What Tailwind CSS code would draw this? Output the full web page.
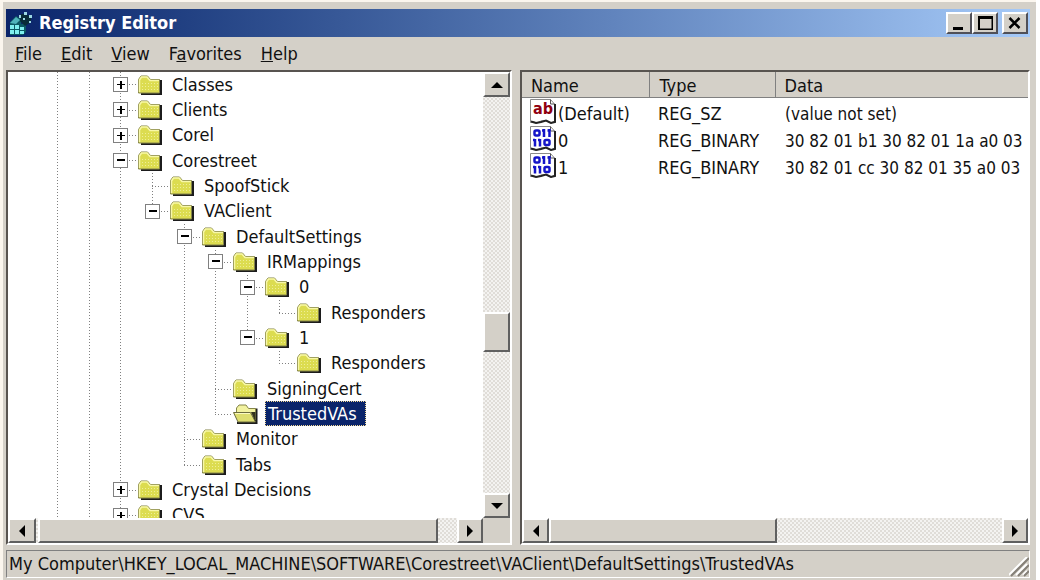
<!DOCTYPE html>
<html lang="en">
<head>
<meta charset="utf-8">
<title>Registry Editor</title>
<script src="https://cdn.jsdelivr.net/npm/@tailwindcss/browser@4"></script>
</head>
<body class="bg-white">
<svg class="hidden" aria-hidden="true">
  <symbol id="folder" viewBox="0 0 24 20">
    <path d="M3 20V18H22V5H24V20Z" fill="#1c1c1c"/>
    <path d="M.5 18V4.500L3 1H9.500L12.500 4.500H21.500V18Z" fill="#dcdc50" stroke="#85854a"/>
    <path d="M1.500 17V5L3.500 2H9L12 5.500H21" fill="none" stroke="#f8f8a8" stroke-width="1.500"/>
    <path d="M4 8.500H20M4 11.500H20M4 14.500H20" stroke="#eeee98" stroke-dasharray="1 2"/>
  </symbol>
  <symbol id="folder-open" viewBox="0 0 26 20">
    <path d="M4 20V18H22L18 8H22V4.500H24.500V20Z" fill="#1c1c1c"/>
    <path d="M3.500 8V4L6 1H13L15.500 4.500H22.500V16" fill="#f2f2a0" stroke="#85854a"/>
    <path d="M.5 8.500H17.500L22.500 18H5Z" fill="#dede70" stroke="#6c6c40"/>
    <path d="M18 8L22.500 18V8Z" fill="#33331c"/>
    <path d="M2 9.500H17" stroke="#fafac0"/>
  </symbol>
  <symbol id="page" viewBox="0 0 26 25">
    <path d="M.5 23.500V.5H20.500L24.500 5V22L21 24L16 21.500L11 22L7 24L3 22.500Z" fill="#fff" stroke="#8a8a8a"/>
    <path d="M20.500 .5V5H24.500" fill="none" stroke="#555"/>
    <path d="M25 5V23L21 24L16 21.500L11 23L6 24L1 22.500" fill="none" stroke="#222" stroke-width="2"/>
  </symbol>
  <symbol id="binary" viewBox="0 0 26 25">
    <use href="#page" width="26" height="25"/>
    <g fill="none" stroke="#1414c8" stroke-width="2.500">
      <rect x="4.500" y="4.500" width="5" height="5" rx="1.500"/><path d="M14 3V11M19.500 3V11M12 4.500H14M17.500 4.500H19.500"/>
      <path d="M5 13V20.500M10 13V20.500M3 14H5M8 14H10"/><rect x="14.500" y="14" width="5" height="5" rx="1.500"/>
    </g>
  </symbol>
</svg>
<main class="mr-1 flex h-screen min-h-[400px] flex-col border-t-2 border-l-3 border-[#fbf6ee] bg-[#d4d0c8] pt-[7px] pr-[6px] pb-[2px] pl-[3px] font-['DejaVu_Sans_Condensed','DejaVu_Sans',sans-serif] text-[18px] leading-5 text-[#111]">
  <header class="flex h-7 shrink-0 items-center bg-linear-to-r from-[#0a246a] to-[#a6caf8] pr-[2px] pl-[3px]">
    <svg class="h-[25px] w-6 shrink-0" viewBox="0 0 24 25" aria-hidden="true">
      <path d="M1 11L7 5L12 8V13H17V21L14 24H1Z" fill="#0c5a64"/>
      <path d="M1 12L7 6L11 9L7 13Z" fill="#4fb4bc"/>
      <g fill="#7ff0f0"><path d="M1 14H5V18H1ZM6 14H10V18H6ZM11 16H15V19H11ZM1 19H5V23H1ZM6 19H10V23H6ZM11 20H15V23H11Z"/></g>
      <path d="M12 3H17L22 6V11L16 15L11 10Z" fill="#082c38"/>
      <g fill="#9cd8e4"><path d="M15 1H18V4H15ZM20 4H23V7H20ZM10 4H12V7H10ZM20 10H22V12H20ZM14 7H16V9H14Z"/></g>
    </svg>
    <h1 class="ml-[6px] flex-1 font-bold text-white">Registry Editor</h1>
    <div class="flex">
      <button aria-label="Minimize" class="flex h-[22px] w-[26px] items-center justify-center border-2 border-t-white border-r-[#505058] border-b-[#505058] border-l-white bg-[#d4d0c8]"><svg class="h-4 w-5" viewBox="0 0 20 16"><path d="M4 12H14V15H4Z"/></svg></button>
      <button aria-label="Maximize" class="flex h-[22px] w-[26px] items-center justify-center border-2 border-t-white border-r-[#505058] border-b-[#505058] border-l-white bg-[#d4d0c8]"><svg class="h-4 w-5" viewBox="0 0 20 16"><path d="M3 1H18V15H3ZM5 4V13.500H16.500V4Z" fill-rule="evenodd"/></svg></button>
      <button aria-label="Close" class="ml-1 flex h-[22px] w-[26px] items-center justify-center border-2 border-t-white border-r-[#505058] border-b-[#505058] border-l-white bg-[#d4d0c8]"><svg class="h-4 w-5" viewBox="0 0 20 16"><path d="M4.500 3L14.500 13M14.500 3L4.500 13" stroke="#000" stroke-width="2.500"/></svg></button>
    </div>
  </header>
  <nav class="flex h-[33px] shrink-0 items-center gap-[19px] pl-[9px]" aria-label="Menu">
    <button><u>F</u>ile</button>
    <button><u>E</u>dit</button>
    <button><u>V</u>iew</button>
    <button>F<u>a</u>vorites</button>
    <button><u>H</u>elp</button>
  </nav>
  <div class="flex min-h-0 flex-1 gap-[8px]">
    <section aria-label="Keys" class="flex w-[506px] shrink-0 flex-col border-2 border-t-[#585450] border-r-white border-b-white border-l-[#585450] bg-white">
      <div class="flex min-h-0 flex-1">
        <div class="relative min-w-0 flex-1 overflow-hidden">
          <svg class="absolute top-0 left-0 h-[456px] w-[475px]" viewBox="0 0 475 456" fill="none" stroke="#808080" stroke-dasharray="1 2" shape-rendering="crispEdges" aria-hidden="true">
            <path d="M49.500 0V456M81.500 0V456M112.500 0V456M144.500 101V140M176.500 152V393M207.500 178V342M239.500 203V267M271.500 228V241M271.500 279V292"/>
            <path d="M112 12.500H130M112 38.500H130M112 63.500H130M112 88.500H130M144 114.500H162M144 139.500H162M176 165.500H193M207 190.500H225M239 215.500H256M271 241.500H288M239 266.500H256M271 291.500H288M207 317.500H225M207 342.500H225M176 367.500H193M176 393.500H193M112 418.500H130M112 443.500H130"/>
          </svg>
          <ul id="tree" class="relative flex h-[456px] flex-col" role="tree"></ul>
        </div>
        <div class="flex w-[27px] shrink-0 flex-col bg-[#ebe9e5] bg-[repeating-conic-gradient(#e0ddd8_0_25%,#f4f3f1_0_50%)] bg-size-[4px_4px]">
          <button aria-label="Scroll up" class="flex h-[25px] items-center justify-center border-2 border-t-white border-r-[#606060] border-b-[#606060] border-l-white bg-[#d4d0c8]"><svg class="h-[6px] w-3" viewBox="0 0 12 6"><path d="M6 0L12 6H0Z"/></svg></button>
          <div class="flex-[214]"></div>
          <div class="h-10 border-2 border-t-white border-r-[#606060] border-b-[#606060] border-l-white bg-[#d4d0c8]"></div>
          <div class="flex-[141]"></div>
          <button aria-label="Scroll down" class="flex h-[25px] items-center justify-center border-2 border-t-white border-r-[#606060] border-b-[#606060] border-l-white bg-[#d4d0c8]"><svg class="h-[6px] w-3" viewBox="0 0 12 6"><path d="M6 6L12 0H0Z"/></svg></button>
        </div>
      </div>
      <div class="flex h-[25px] shrink-0 bg-[#d4d0c8]">
        <div class="flex flex-1 bg-[#ebe9e5] bg-[repeating-conic-gradient(#e0ddd8_0_25%,#f4f3f1_0_50%)] bg-size-[4px_4px]">
          <button aria-label="Scroll left" class="flex w-[28px] items-center justify-center border-2 border-t-white border-r-[#606060] border-b-[#606060] border-l-white bg-[#d4d0c8]"><svg class="h-3 w-[6px]" viewBox="0 0 6 12"><path d="M0 6L6 0V12Z"/></svg></button>
          <div class="ml-[2px] flex-1 border-2 border-t-white border-r-[#606060] border-b-[#606060] border-l-white bg-[#d4d0c8]"></div>
          <div class="w-[19px]"></div>
          <button aria-label="Scroll right" class="flex w-[26px] items-center justify-center border-2 border-t-white border-r-[#606060] border-b-[#606060] border-l-white bg-[#d4d0c8]"><svg class="h-3 w-[6px]" viewBox="0 0 6 12"><path d="M6 6L0 0V12Z"/></svg></button>
        </div>
        <div class="w-[27px]"></div>
      </div>
    </section>
    <section aria-label="Values" class="flex min-w-0 flex-1 flex-col border-2 border-t-[#585450] border-r-white border-b-white border-l-[#585450] bg-white">
      <div class="min-h-0 flex-1 overflow-hidden">
        <table class="w-full table-fixed border-collapse text-left whitespace-nowrap">
          <thead>
            <tr class="h-[25px] border-b border-[#808080] bg-[#d4d0c8]">
              <th class="w-[127px] border-r border-[#808080] p-0 pt-1 pl-[9px] font-normal">Name</th>
              <th class="w-[126px] border-r border-l border-r-[#808080] border-l-white p-0 pt-1 pl-[10px] font-normal">Type</th>
              <th class="border-l border-white p-0 pt-1 pl-[9px] font-normal">Data</th>
            </tr>
          </thead>
          <tbody>
            <tr class="h-[27px] align-bottom">
              <td class="p-0 pl-2"><div class="flex items-end gap-[2px]"><span class="relative h-[25px] w-[26px] shrink-0"><svg class="h-full w-full" aria-hidden="true"><use href="#page"/></svg><span class="absolute inset-x-0 top-0 text-center text-[16px] leading-5 font-bold text-[#900010]">ab</span></span>(Default)</div></td>
              <td class="p-0 pl-[9px]">REG_SZ</td>
              <td class="p-0 pl-[10px] text-[17px]">(value not set)</td>
            </tr>
            <tr class="h-[27px] align-bottom">
              <td class="p-0 pl-2"><div class="flex items-end gap-[2px]"><svg class="h-[25px] w-[26px] shrink-0" aria-hidden="true"><use href="#binary"/></svg>0</div></td>
              <td class="p-0 pl-[9px]">REG_BINARY</td>
              <td class="p-0 pl-[10px] text-[17px]">30 82 01 b1 30 82 01 1a a0 03</td>
            </tr>
            <tr class="h-[27px] align-bottom">
              <td class="p-0 pl-2"><div class="flex items-end gap-[2px]"><svg class="h-[25px] w-[26px] shrink-0" aria-hidden="true"><use href="#binary"/></svg>1</div></td>
              <td class="p-0 pl-[9px]">REG_BINARY</td>
              <td class="p-0 pl-[10px] text-[17px]">30 82 01 cc 30 82 01 35 a0 03</td>
            </tr>
          </tbody>
        </table>
      </div>
      <div class="flex h-[25px] shrink-0 bg-[#ebe9e5] bg-[repeating-conic-gradient(#e0ddd8_0_25%,#f4f3f1_0_50%)] bg-size-[4px_4px]">
        <button aria-label="Scroll left" class="flex w-[27px] items-center justify-center border-2 border-t-white border-r-[#606060] border-b-[#606060] border-l-white bg-[#d4d0c8]"><svg class="h-3 w-[6px]" viewBox="0 0 6 12"><path d="M0 6L6 0V12Z"/></svg></button>
        <div class="flex-[226] border-2 border-t-white border-r-[#606060] border-b-[#606060] border-l-white bg-[#d4d0c8]"></div>
        <div class="flex-[227]"></div>
        <button aria-label="Scroll right" class="flex w-[26px] items-center justify-center border-2 border-t-white border-r-[#606060] border-b-[#606060] border-l-white bg-[#d4d0c8]"><svg class="h-3 w-[6px]" viewBox="0 0 6 12"><path d="M6 6L0 0V12Z"/></svg></button>
      </div>
    </section>
  </div>
  <footer class="mt-[5px] flex h-7 shrink-0 items-center justify-between border border-t-[#808080] border-r-white border-b-white border-l-[#808080] pl-[2px]">
    <p class="whitespace-nowrap">My Computer\HKEY_LOCAL_MACHINE\SOFTWARE\Corestreet\VAClient\DefaultSettings\TrustedVAs</p>
    <svg class="h-5 w-5 shrink-0 self-end" viewBox="0 0 20 20" stroke-width="2" aria-hidden="true"><path d="M0 18L18 0M7 18L18 7M14 18L18 14" stroke="#fff"/><path d="M2 19L20 1M9 19L20 8M15 19L20 14" stroke="#858078"/></svg>
  </footer>
</main>
<script>
  // [depth, state, name]; state: + collapsed, - expanded, "" leaf
  const keys = [
    [0, "+", "Classes"], [0, "+", "Clients"], [0, "+", "Corel"], [0, "-", "Corestreet"],
    [1, "", "SpoofStick"], [1, "-", "VAClient"], [2, "-", "DefaultSettings"], [3, "-", "IRMappings"],
    [4, "-", "0"], [5, "", "Responders"], [4, "-", "1"], [5, "", "Responders"],
    [3, "", "SigningCert"], [3, "", "TrustedVAs"], [2, "", "Monitor"], [2, "", "Tabs"],
    [0, "+", "Crystal Decisions"], [0, "+", "CVS"]
  ];
  const indent = ["pl-[105px]", "pl-[137px]", "pl-[169px]", "pl-[200px]", "pl-[232px]", "pl-[264px]"];
  document.getElementById("tree").innerHTML = keys.map(([depth, state, name]) => {
    const toggle = state
      ? `<button aria-label="Toggle ${name}" class="h-[15px] w-[15px] shrink-0 border border-[#808080] bg-white"><svg viewBox="0 0 13 13" class="h-[13px] w-[13px]" shape-rendering="crispEdges"><path d="M3 6h8v1H3z${state === "+" ? "M6 3h2v8H6z" : "M3 5h8v1H3z"}"/></svg></button>`
      : `<span class="w-[15px] shrink-0"></span>`;
    const open = name === "TrustedVAs";
    const label = open
      ? `<span class="ml-[6px] border border-dotted border-[#f5db95] bg-[#0a246a] pr-2 pl-[2px] leading-[23px] text-white">${name}</span>`
      : `<span class="ml-[10px]">${name}</span>`;
    return `<li role="treeitem" class="flex min-h-0 flex-1 items-center whitespace-nowrap ${indent[depth]}">${toggle}<svg class="ml-[10px] h-5 shrink-0 ${open ? "w-[26px]" : "w-6"}" aria-hidden="true"><use href="${open ? "#folder-open" : "#folder"}"/></svg>${label}</li>`;
  }).join("");
</script>
</body>
</html>
